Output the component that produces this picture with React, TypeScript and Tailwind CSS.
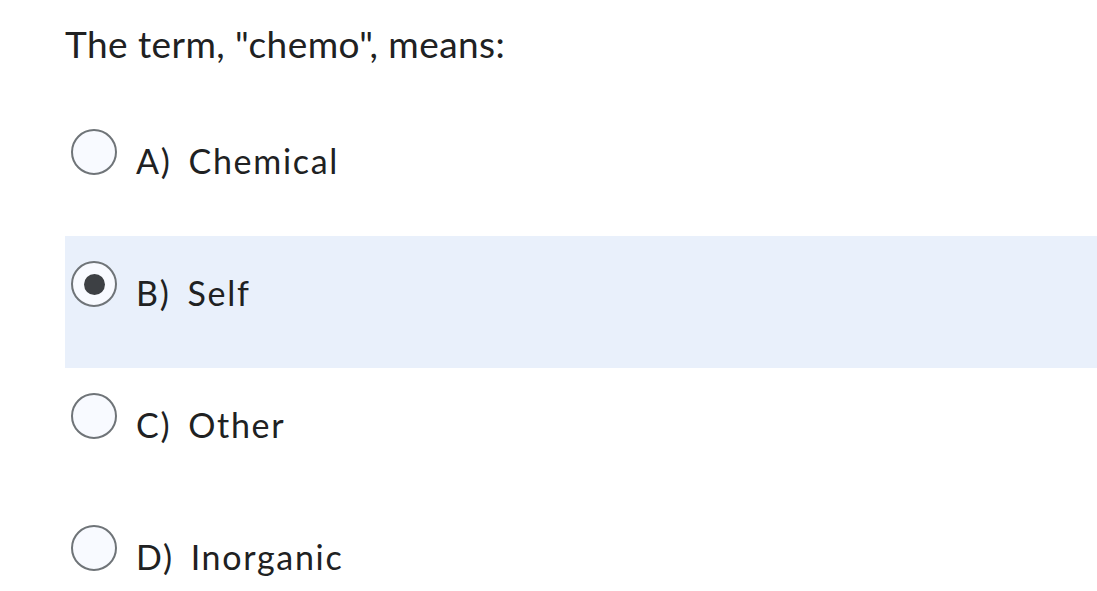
const options = [
  { letter: "A)", label: "Chemical", selected: false },
  { letter: "B)", label: "Self", selected: true },
  { letter: "C)", label: "Other", selected: false },
  { letter: "D)", label: "Inorganic", selected: false },
];

function Radio({ checked }: { checked: boolean }) {
  return (
    <span className="mt-[25px] ml-[6px] flex h-[46px] w-[46px] shrink-0 items-center justify-center rounded-full border-2 border-[#6f7478] bg-[#f8faff]">
      {checked && <span className="h-[21px] w-[21px] rounded-full bg-[#3d4044]" />}
    </span>
  );
}

export default function App() {
  return (
    <div
      className="h-[591px] w-full overflow-hidden bg-white pl-[65px] text-[#202122]"
      style={{ fontFamily: "Lato, 'Open Sans', sans-serif" }}
    >
      <h1 className="pt-[22px] text-[37px] font-normal leading-[1.2] tracking-[0.012em]">
        The term, "chemo", means:
      </h1>
      <div className="mt-[38px] flex flex-col">
        {options.map((o) => (
          <label
            key={o.letter}
            className={`flex h-[132px] items-start ${o.selected ? "bg-[#e9f0fb]" : ""}`}
          >
            <Radio checked={o.selected} />
            <span className="ml-[19px] mt-[37px] flex text-[34px] leading-[1.2] tracking-[0.05em]">
              <span>{o.letter}</span>
              <span className="ml-[17px]">{o.label}</span>
            </span>
          </label>
        ))}
      </div>
    </div>
  );
}
